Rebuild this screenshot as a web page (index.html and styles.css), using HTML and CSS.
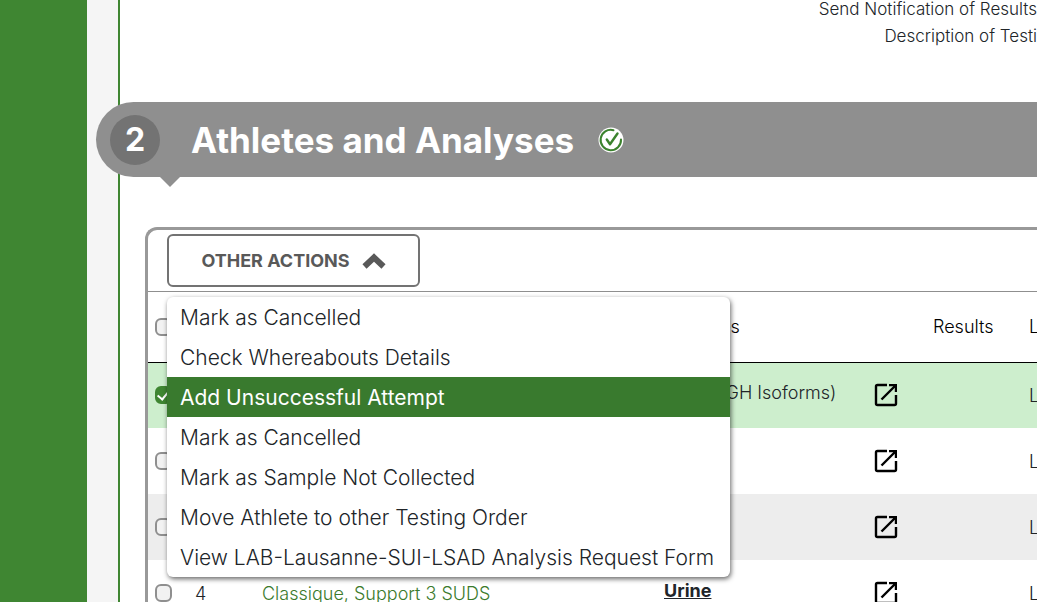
FILE: index.html
```
<!DOCTYPE html>
<html lang="en">
<head>
	<title>Athletes and Analyses</title>
	<meta charset="UTF-8">
	<meta name="viewport" content="width=device-width, initial-scale=1">
	<link rel="stylesheet" href="styles.css">
</head>
<body>
	<svg class="sprite" aria-hidden="true">
		<symbol id="icon_open" viewBox="0 0 24 24">
			<path d="M13 2H3.5Q2 2 2 3.5V20.5Q2 22 3.5 22H20.5Q22 22 22 20.5V12" fill="none" stroke="currentColor" stroke-width="2.4" />
			<path d="M7.5 16.5L20.5 3.5" stroke="currentColor" stroke-width="2.4" />
			<path d="M15 1H23V9H20.8V5L19 3.2H15Z" fill="currentColor" />
		</symbol>
	</svg>
	<div id="page">
		<aside class="sidebar"></aside>
		<div class="gutter"></div>
		<main>
			<div class="details">
				<div>Send Notification of Results</div>
				<div>Description of Testi</div>
			</div>

			<header class="section_bar">
				<span class="step">2</span>
				<h1>Athletes and Analyses</h1>
				<svg class="done" viewBox="0 0 26 26" aria-hidden="true">
					<circle cx="13" cy="13" r="12.5" fill="#fff" />
					<path d="M15.5 3.2A10.2 10.2 0 1 0 23 12.5" fill="none" stroke="#3b822d" stroke-width="2" stroke-linecap="round" />
					<path d="M8.8 12.5L12 17.2L19.5 6.5" fill="none" stroke="#3b822d" stroke-width="2.4" stroke-linecap="round" stroke-linejoin="round" />
				</svg>
			</header>

			<section class="panel">
				<div class="toolbar">
					<div class="dropdown">
						<button type="button" class="toggle" aria-expanded="true">
							Other Actions
							<svg class="chevron" viewBox="0 0 24 16" aria-hidden="true">
								<path d="M2.5 13.5L12 4.5L21.5 13.5" fill="none" stroke="currentColor" stroke-width="6" />
							</svg>
						</button>
						<ul class="menu">
							<li><button type="button">Mark as Cancelled</button></li>
							<li><button type="button">Check Whereabouts Details</button></li>
							<li><button type="button" class="active">Add Unsuccessful Attempt</button></li>
							<li><button type="button">Mark as Cancelled</button></li>
							<li><button type="button">Mark as Sample Not Collected</button></li>
							<li><button type="button">Move Athlete to other Testing Order</button></li>
							<li><button type="button">View LAB-Lausanne-SUI-LSAD Analysis Request Form</button></li>
						</ul>
					</div>
				</div>

				<table>
					<colgroup>
						<col class="col_check">
						<col class="col_number">
						<col class="col_name">
						<col class="col_analyses">
						<col class="col_open">
						<col class="col_results">
						<col class="col_lab">
					</colgroup>
					<thead>
						<tr>
							<th><input type="checkbox" aria-label="Select all"></th>
							<th></th>
							<th></th>
							<th>Analyses</th>
							<th></th>
							<th>Results</th>
							<th>L</th>
						</tr>
					</thead>
					<tbody>
						<tr class="selected">
							<td><input type="checkbox" aria-label="Select athlete 1" checked></td>
							<td></td>
							<td></td>
							<td class="analyses"><a href="#">Blood</a> (GH Isoforms)</td>
							<td><a href="#" aria-label="Open"><svg class="open"><use href="#icon_open" /></svg></a></td>
							<td></td>
							<td>L</td>
						</tr>
						<tr>
							<td><input type="checkbox" aria-label="Select athlete 2"></td>
							<td></td>
							<td></td>
							<td></td>
							<td><a href="#" aria-label="Open"><svg class="open"><use href="#icon_open" /></svg></a></td>
							<td></td>
							<td>L</td>
						</tr>
						<tr class="odd">
							<td><input type="checkbox" aria-label="Select athlete 3"></td>
							<td></td>
							<td></td>
							<td></td>
							<td><a href="#" aria-label="Open"><svg class="open"><use href="#icon_open" /></svg></a></td>
							<td></td>
							<td>L</td>
						</tr>
						<tr>
							<td><input type="checkbox" aria-label="Select athlete 4"></td>
							<td>4</td>
							<td><a href="#" class="athlete">Classique, Support 3 SUDS</a></td>
							<td class="analyses"><a href="#">Urine</a></td>
							<td><a href="#" aria-label="Open"><svg class="open"><use href="#icon_open" /></svg></a></td>
							<td></td>
							<td>L</td>
						</tr>
					</tbody>
				</table>
			</section>
		</main>
	</div>
</body>
</html>
```
FILE: styles.css
```
* {
	box-sizing: border-box;
}

body {
	margin: 0;
	overflow: hidden;
	background-color: white;
	color: #212529;
	font-family: Inter, "Open Sans", sans-serif;
	font-size: 18px;
	font-weight: 300;
}

a {
	color: inherit;
}

.sprite {
	display: none;
}

#page {
	display: flex;
	min-height: 100vh;
}

.sidebar {
	flex: 0 0 87px;
	background-color: #3f8632;
}

.gutter {
	flex: 0 0 31px;
	background-color: #f5f5f5;
}

main {
	flex: 1;
	min-width: 0;
	border-left: 2px solid #3f8632;
}

.details {
	height: 102px;
	font-size: 17px;
	line-height: 27px;
	text-align: right;
	margin-top: -4px;
	margin-bottom: 4px;
}

/* Section heading */
.section_bar {
	position: relative;
	display: flex;
	align-items: center;
	height: 75px;
	margin-left: -24px;
	padding-left: 14px;
	border-radius: 38px 0 0 38px;
	background-color: #8f8f8f;
	color: white;
}

.section_bar::after {
	content: "";
	position: absolute;
	left: 64px;
	top: 100%;
	border: 10px solid transparent;
	border-top-color: #8f8f8f;
	border-bottom: none;
}

.step {
	width: 50px;
	height: 50px;
	border-radius: 50%;
	background-color: #737373;
	font-size: 32px;
	font-weight: 700;
	line-height: 50px;
	text-align: center;
}

h1 {
	margin: 0 24px 0 31px;
	font-size: 35px;
	font-weight: 700;
	line-height: 40px;
}

.done {
	width: 26px;
	height: 26px;
}

.panel {
	margin: 50px 0 0 25px;
	border: 3px solid #999;
	border-right: none;
	border-bottom: none;
	border-radius: 12px 0 0 0;
}

.toolbar {
	padding: 4px 19px;
	border-bottom: 1px solid #8f8f8f;
}

/* Dropdown */
.dropdown {
	position: relative;
	width: 253px;
}

.toggle {
	display: flex;
	align-items: center;
	justify-content: center;
	gap: 12px;
	width: 100%;
	height: 53px;
	border: 2px solid #737373;
	border-radius: 6px;
	background-color: white;
	color: #595959;
	font-family: inherit;
	font-size: 18px;
	font-weight: 700;
	text-transform: uppercase;
}

.chevron {
	width: 24px;
	height: 16px;
}

.menu {
	position: absolute;
	z-index: 1;
	left: 0;
	top: 63px;
	width: 563px;
	margin: 0;
	padding: 0;
	border-radius: 6px;
	background-color: white;
	box-shadow: 1px 2px 5px rgba( 0, 0, 0, 0.6 );
	list-style: none;
}

.menu button {
	display: block;
	width: 100%;
	height: 40px;
	padding: 0 13px;
	border: none;
	background: none;
	color: #212529;
	font-family: inherit;
	font-size: 21px;
	font-weight: 300;
	text-align: left;
	white-space: nowrap;
}

.menu .active {
	background-color: #397a2e;
	color: white;
	font-weight: 400;
}

/* Athletes table */
table {
	width: 100%;
	table-layout: fixed;
	border-collapse: collapse;
}

.col_check {
	width: 34px;
}

.col_number {
	width: 80px;
}

.col_name {
	width: 402px;
}

.col_analyses {
	width: 210px;
}

.col_open {
	width: 59px;
}

.col_results {
	width: 96px;
}

th,
td {
	height: 66px;
	padding: 0;
	font-weight: 300;
	text-align: left;
	white-space: nowrap;
}

th {
	height: 70px;
	border-bottom: 1px solid black;
	color: black;
}

th:first-child,
td:first-child {
	padding-left: 7px;
}

td:nth-child(2) {
	padding-left: 13px;
}

.selected {
	background-color: #cdeecd;
}

.odd {
	background-color: #ededed;
}

.analyses {
	padding-bottom: 6px;
}

.analyses a {
	font-weight: 700;
}

.athlete {
	color: #3b7a2c;
	text-decoration: none;
}

.open {
	display: block;
	width: 24px;
	height: 24px;
	color: black;
}

input[type="checkbox"] {
	display: block;
	appearance: none;
	width: 17px;
	height: 18px;
	margin: 0;
	border: 2px solid #8f8f8f;
	border-radius: 6px;
	background-color: #f2f2f2;
}

input[type="checkbox"]:checked {
	display: flex;
	align-items: center;
	justify-content: center;
	border-color: #3f8632;
	background-color: #3f8632;
}

input[type="checkbox"]:checked::after {
	content: "";
	width: 5px;
	height: 10px;
	margin-bottom: 3px;
	border: solid white;
	border-width: 0 2px 2px 0;
	transform: rotate( 40deg );
}
```
